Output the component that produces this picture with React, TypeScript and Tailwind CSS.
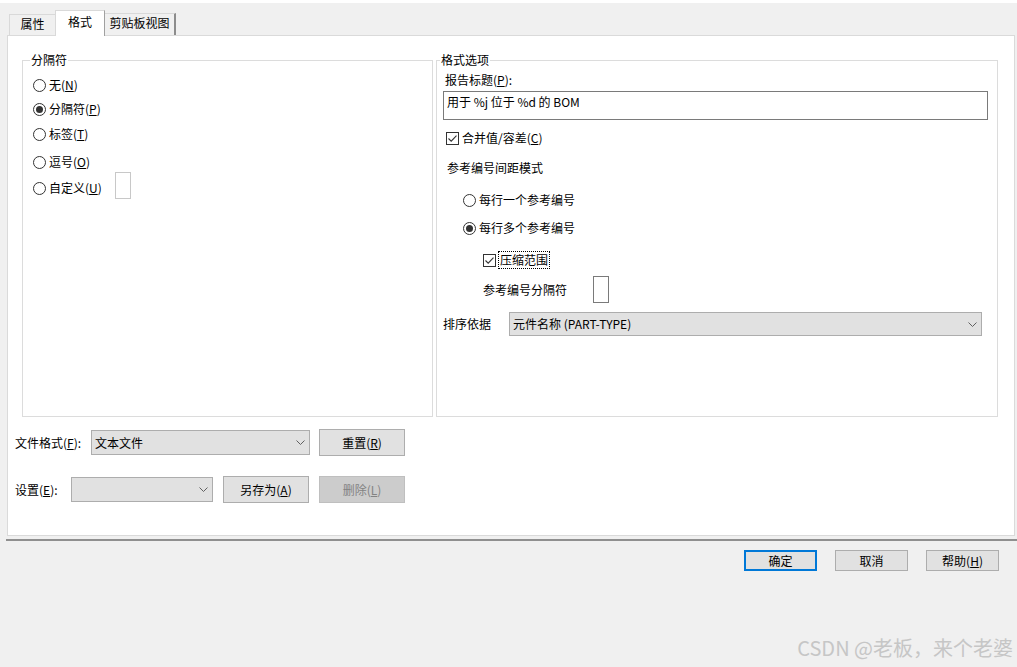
import type { ReactNode } from "react"

function Radio({ checked = false }: { checked?: boolean }) {
  return (
    <svg width="13" height="13" viewBox="0 0 13 13" className="shrink-0">
      <circle cx="6.5" cy="6.5" r="6" fill="#fff" stroke="#333" strokeWidth="1" />
      {checked && <circle cx="6.5" cy="6.5" r="3.5" fill="#333" />}
    </svg>
  )
}

function Check() {
  return (
    <svg width="13" height="13" viewBox="0 0 13 13" className="shrink-0">
      <rect x="0.5" y="0.5" width="12" height="12" fill="#fff" stroke="#333" strokeWidth="1" />
      <path d="M2.5 6.5 L5.2 9.2 L10.5 3.6" fill="none" stroke="#333" strokeWidth="1.1" />
    </svg>
  )
}

function Chevron() {
  return (
    <svg width="9" height="5" viewBox="0 0 9 5" className="shrink-0">
      <path d="M0.5 0.5 L4.5 4.5 L8.5 0.5" fill="none" stroke="#606060" strokeWidth="1" />
    </svg>
  )
}

function Select({ className, children }: { className: string; children?: ReactNode }) {
  return (
    <div
      className={`flex items-center justify-between border border-[#adadad] bg-[#e1e1e1] pl-[3px] pr-[4px] ${className}`}
    >
      <span>{children}</span>
      <Chevron />
    </div>
  )
}

export default function App() {
  return (
    <div className="relative h-[667px] w-[1017px] overflow-hidden bg-[#f0f0f0] font-['Noto_Sans_CJK_SC',sans-serif] text-[12px] leading-[16px] text-black">
      <div className="h-[3px] bg-white" />

      {/* Tabs */}
      <div className="flex h-[32px] items-end pl-[9px]">
        <div className="h-[21px] w-[46px] border-l border-t border-[#d9d9d9] pt-[1px] text-center">属性</div>
        <div className="relative z-10 -mb-px h-[26px] w-[50px] border-l border-r border-t border-l-[#d9d9d9] border-r-[#a0a0a0] border-t-[#d9d9d9] bg-white pt-[3px] text-center">
          格式
        </div>
        <div className="h-[22px] w-[71px] border-r-2 border-t border-r-[#8c8c8c] border-t-[#d9d9d9] pt-[1px] text-center">
          剪贴板视图
        </div>
      </div>

      {/* Page */}
      <div className="ml-[7px] h-[501px] w-[1008px] border border-[#dadada] bg-white">
        <div className="flex pl-[14px] pt-[16px]">
          {/* 分隔符 */}
          <fieldset className="h-[365px] w-[411px] border border-[#dcdcdc]">
            <legend className="ml-[7px] px-[1px] leading-[16px]">分隔符</legend>
            <div className="pl-[10px]">
              <div className="mt-[7px] flex h-[20px] items-center gap-[3px]">
                <Radio />
                <span>
                  无(<u>N</u>)
                </span>
              </div>
              <div className="mt-[4px] flex h-[20px] items-center gap-[3px]">
                <Radio checked />
                <span>
                  分隔符(<u>P</u>)
                </span>
              </div>
              <div className="mt-[5px] flex h-[20px] items-center gap-[3px]">
                <Radio />
                <span>
                  标签(<u>T</u>)
                </span>
              </div>
              <div className="mt-[8px] flex h-[20px] items-center gap-[3px]">
                <Radio />
                <span>
                  逗号(<u>O</u>)
                </span>
              </div>
              <div className="flex items-start">
                <div className="mt-[6px] flex h-[20px] w-[82px] items-center gap-[3px]">
                  <Radio />
                  <span>
                    自定义(<u>U</u>)
                  </span>
                </div>
                <div className="h-[27px] w-[16px] border border-[#c8c8c8]" />
              </div>
            </div>
          </fieldset>

          {/* 格式选项 */}
          <fieldset className="ml-[3px] h-[365px] w-[562px] border border-[#dcdcdc]">
            <legend className="ml-[3px] px-[1px] leading-[16px]">格式选项</legend>
            <div className="mt-[2px] flex h-[20px] items-center pl-[8px]">
              <span>
                报告标题(<u>P</u>):
              </span>
            </div>
            <div className="ml-[6px] mt-[1px] h-[29px] w-[545px] border border-[#7a7a7a] pl-[3px] leading-[20px]">
              用于 %j 位于 %d 的 BOM
            </div>
            <div className="ml-[9px] mt-[8px] flex h-[20px] items-center gap-[3px]">
              <Check />
              <span>
                合并值/容差(<u>C</u>)
              </span>
            </div>
            <div className="ml-[10px] mt-[10px] flex h-[20px] items-center">参考编号间距模式</div>
            <div className="ml-[26px] mt-[12px] flex h-[20px] items-center gap-[3px]">
              <Radio />
              <span>每行一个参考编号</span>
            </div>
            <div className="ml-[26px] mt-[8px] flex h-[20px] items-center gap-[3px]">
              <Radio checked />
              <span>每行多个参考编号</span>
            </div>
            <div className="ml-[46px] mt-[12px] flex h-[20px] items-center gap-[2px]">
              <Check />
              <span className="border border-dotted border-black px-[1px] leading-[16px]">压缩范围</span>
            </div>
            <div className="ml-[46px] mt-[6px] flex h-[27px] items-center">
              <span className="w-[110px]">参考编号分隔符</span>
              <div className="h-[27px] w-[16px] border border-[#7a7a7a]" />
            </div>
            <div className="ml-[6px] mt-[9px] flex h-[24px] items-center">
              <span className="w-[66px]">排序依据</span>
              <Select className="h-[24px] w-[473px]">元件名称 (PART-TYPE)</Select>
            </div>
          </fieldset>
        </div>

        {/* File format / settings */}
        <div className="mt-[12px] flex h-[27px] items-center pl-[7px]">
          <span className="w-[76px]">
            文件格式(<u>F</u>):
          </span>
          <Select className="h-[25px] w-[219px]">文本文件</Select>
          <button className="ml-[9px] h-[27px] w-[86px] border border-[#adadad] bg-[#e1e1e1]">
            重置(<u>R</u>)
          </button>
        </div>
        <div className="mt-[20px] flex h-[27px] items-center pl-[7px]">
          <span className="w-[56px]">
            设置(<u>E</u>):
          </span>
          <Select className="h-[25px] w-[142px]" />
          <button className="ml-[10px] h-[27px] w-[86px] border border-[#adadad] bg-[#e1e1e1]">
            另存为(<u>A</u>)
          </button>
          <button className="ml-[10px] h-[27px] w-[86px] border border-[#bfbfbf] bg-[#cccccc] text-[#838383]">
            删除(<u>L</u>)
          </button>
        </div>
      </div>

      <div className="h-[3px]" />
      <div className="ml-[6px] h-[2px] bg-[#8f8f8f]" />

      {/* Dialog buttons */}
      <div className="mt-[9px] flex justify-end gap-[18px] pr-[18px]">
        <button className="h-[21px] w-[73px] border-2 border-[#0078d7] bg-[#e1e1e1] leading-[16px]">确定</button>
        <button className="h-[21px] w-[73px] border border-[#adadad] bg-[#e1e1e1] leading-[16px]">取消</button>
        <button className="h-[21px] w-[73px] border border-[#adadad] bg-[#e1e1e1] leading-[16px]">
          帮助(<u>H</u>)
        </button>
      </div>

      <div className="absolute bottom-[6px] right-[4px] text-[20px] leading-[26px] text-[#c6c6c6]">
        CSDN @老板，来个老婆
      </div>
    </div>
  )
}
